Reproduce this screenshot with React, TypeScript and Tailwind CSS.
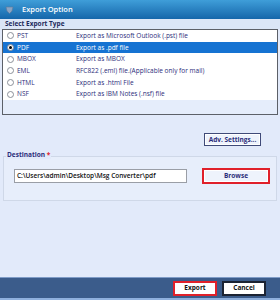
const rows = [
  { code: 'PST', desc: 'Export as Microsoft Outlook (.pst) file' },
  { code: 'PDF', desc: 'Export as .pdf file', selected: true },
  { code: 'MBOX', desc: 'Export as MBOX' },
  { code: 'EML', desc: 'RFC822 (.eml) file.(Applicable only for mail)' },
  { code: 'HTML', desc: 'Export as .html File' },
  { code: 'NSF', desc: 'Export as IBM Notes (.nsf) file' },
];

function Radio({ checked }: { checked?: boolean }) {
  return (
    <span className="flex h-[7px] w-[7px] items-center justify-center rounded-full border border-[#8a8f99] bg-white">
      {checked && <span className="h-[3px] w-[3px] rounded-full bg-black" />}
    </span>
  );
}

export default function App() {
  return (
    <div
      className="flex h-[300px] w-[280px] flex-col overflow-hidden bg-[#e2eafa] text-[6.5px]"
      style={{ fontFamily: '"Open Sans", "Noto Sans", sans-serif' }}
    >
      {/* title bar */}
      <div className="flex h-[19px] items-center gap-[8px] bg-gradient-to-b from-[#3f9ed9] to-[#1466aa] pl-[5px]">
        <svg width="9" height="8" viewBox="0 0 9 8">
          <path d="M1 1 L8 1 L7 5 L4.5 7.5 L2 5 Z" fill="#8aa4c4" stroke="#5f7898" strokeWidth="0.6" />
        </svg>
        <span className="text-[7.5px] font-semibold text-white">Export Option</span>
      </div>

      {/* section header */}
      <div className="flex h-[10px] items-center bg-[#dbe6f7] pl-[5px] font-bold text-[#1d2a5c]">
        Select Export Type
      </div>

      {/* list */}
      <div className="mx-[2px] h-[86px] border border-[#5c6068] bg-[#e5edfb]">
        {rows.map((r) => (
          <div
            key={r.code}
            className={`flex h-[11.7px] items-center ${r.selected ? 'bg-[#1673d2] text-white' : 'bg-white text-[#2b2d7a]'}`}
          >
            <span className="flex w-[13px] justify-center pl-[2px]">
              <Radio checked={r.selected} />
            </span>
            <span className="w-[60px] pl-[1px]">{r.code}</span>
            <span>{r.desc}</span>
          </div>
        ))}
      </div>

      {/* adv settings */}
      <div className="flex justify-end pr-[19px] pt-[18px]">
        <button className="h-[13px] w-[57px] border border-[#3f4a78] bg-[#eef3fc] font-bold text-[#2b2d7a] shadow-[inset_0_0_0_1px_#ffffff]">
          Adv. Settings...
        </button>
      </div>

      {/* destination */}
      <div className="relative mx-[3px] mt-[10px] h-[45px] border border-[#cfd8e8] bg-[#e7eefb]">
        <span className="absolute -top-[5px] left-[2px] bg-[#e2eafa] px-[1px] font-bold leading-none text-[#2b2d7a]">
          Destination <span className="text-[#e0202a]">*</span>
        </span>
        <div className="flex items-center pt-[11px]">
          <div className="ml-[10px] flex h-[14px] w-[173px] items-center border border-[#9a9ea6] bg-white pl-[2px] font-semibold text-[#111]">
            C:\Users\admin\Desktop\Msg Converter\pdf
          </div>
          <button className="ml-[15px] h-[16px] w-[68px] border-2 border-[#e0202a] bg-[#eef3fc] font-bold text-[#2b2d7a] shadow-[inset_0_0_0_1px_#ffffff]">
            Browse
          </button>
        </div>
      </div>

      <div className="flex-1" />

      {/* footer */}
      <div className="flex h-[21px] items-center justify-end gap-[5px] border-t border-[#7f9cc7] bg-[#3b5c8b] pr-[14px]">
        <button className="h-[15px] w-[44px] border-2 border-[#e0202a] bg-white font-bold text-[#111]">
          Export
        </button>
        <button className="h-[15px] w-[44px] border-2 border-[#1b2333] bg-white font-bold text-[#111]">
          Cancel
        </button>
      </div>
      <div className="h-[2px] bg-[#8fb0dd]" />
    </div>
  );
}
